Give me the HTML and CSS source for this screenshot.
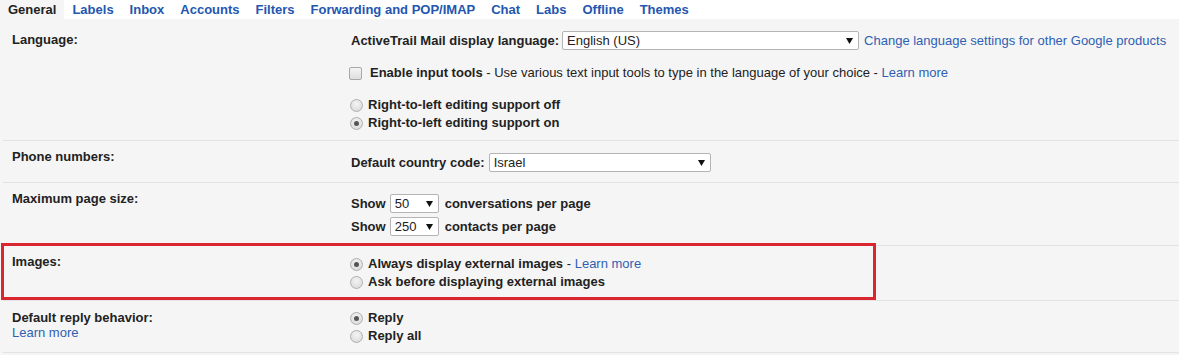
FILE: index.html
```html
<!DOCTYPE html>
<html lang="en">
<head>
<meta charset="utf-8">
<title>Settings</title>
<link rel="stylesheet" href="styles.css">
</head>
<body>
<nav class="tabs">
  <span class="tab active">General</span>
  <a class="tab" href="#">Labels</a>
  <a class="tab" href="#">Inbox</a>
  <a class="tab" href="#">Accounts</a>
  <a class="tab" href="#">Filters</a>
  <a class="tab" href="#">Forwarding and POP/IMAP</a>
  <a class="tab" href="#">Chat</a>
  <a class="tab" href="#">Labs</a>
  <a class="tab" href="#">Offline</a>
  <a class="tab" href="#">Themes</a>
</nav>

<main class="settings">
  <section class="row row-first">
    <div class="label">Language:</div>
    <div class="value">
      <div class="line sel-line">
        <b>ActiveTrail Mail display language:</b>
        <span class="select sel-lang"><span class="sel-text">English (US)</span><svg class="arrow" width="7" height="6" viewBox="0 0 7 6"><path d="M0 0H7L3.5 6Z"/></svg></span>
        <a class="link after-sel" href="#">Change language settings for other Google products</a>
      </div>
      <div class="line check-line">
        <span class="checkbox"></span>
        <span><b>Enable input tools</b> - Use various text input tools to type in the language of your choice - <a class="link" href="#">Learn more</a></span>
      </div>
      <div class="radio-group">
        <div class="radio-line"><span class="radio"></span><b>Right-to-left editing support off</b></div>
        <div class="radio-line"><span class="radio checked"></span><b>Right-to-left editing support on</b></div>
      </div>
    </div>
  </section>

  <section class="row row-phone">
    <div class="label">Phone numbers:</div>
    <div class="value">
      <div class="line sel-line">
        <b>Default country code:</b>
        <span class="select sel-country"><span class="sel-text">Israel</span><svg class="arrow" width="7" height="6" viewBox="0 0 7 6"><path d="M0 0H7L3.5 6Z"/></svg></span>
      </div>
    </div>
  </section>

  <section class="row row-size">
    <div class="label">Maximum page size:</div>
    <div class="value stack">
      <div class="line sel-line">
        <b>Show</b>
        <span class="select sel-small"><span class="sel-text">50</span><svg class="arrow" width="7" height="6" viewBox="0 0 7 6"><path d="M0 0H7L3.5 6Z"/></svg></span>
        <b class="after-small">conversations per page</b>
      </div>
      <div class="line sel-line">
        <b>Show</b>
        <span class="select sel-small"><span class="sel-text">250</span><svg class="arrow" width="7" height="6" viewBox="0 0 7 6"><path d="M0 0H7L3.5 6Z"/></svg></span>
        <b class="after-small">contacts per page</b>
      </div>
    </div>
  </section>

  <section class="row row-images">
    <div class="highlight"></div>
    <div class="label">Images:</div>
    <div class="value">
      <div class="radio-line"><span class="radio checked"></span><span><b>Always display external images</b> - <a class="link" href="#">Learn more</a></span></div>
      <div class="radio-line"><span class="radio"></span><b>Ask before displaying external images</b></div>
    </div>
  </section>

  <section class="row row-reply">
    <div class="label">Default reply behavior:<br><a class="link normal" href="#">Learn more</a></div>
    <div class="value">
      <div class="radio-line"><span class="radio checked"></span><b>Reply</b></div>
      <div class="radio-line"><span class="radio"></span><b>Reply all</b></div>
    </div>
  </section>
</main>
</body>
</html>
```

FILE: styles.css
```css
* { box-sizing: border-box; }

html, body {
  margin: 0;
  padding: 0;
  background: #ffffff;
}

body {
  font-family: "Liberation Sans", Arial, sans-serif;
  font-size: 13px;
  color: #222222;
  height: 355px;
  display: flex;
  flex-direction: column;
  overflow: hidden;
}

b { font-weight: bold; }

.tabs {
  display: flex;
  height: 19px;
  background: #ffffff;
}

.tab {
  display: block;
  padding: 0 8px;
  height: 19px;
  line-height: 19px;
  font-weight: bold;
  color: #2456b0;
  text-decoration: none;
}

.tab.active {
  color: #222222;
  background: #f5f5f5;
}

.settings {
  flex: 1;
  background: #f5f5f5;
}

.row {
  position: relative;
  display: grid;
  grid-template-columns: 346px 1fr;
  margin-left: 3px;
  border-bottom: 1px solid #e3e3e3;
}

.label {
  padding: 7px 0 0 9px;
  line-height: 18px;
  font-weight: bold;
}

.label .normal { font-weight: normal; }

.value {
  line-height: 18px;
}

.link {
  color: #2f5fb3;
  text-decoration: none;
  font-weight: normal;
}

.line {
  display: flex;
  align-items: center;
  padding-left: 2px;
}

.sel-line { height: 19px; }

.select {
  display: inline-flex;
  align-items: center;
  justify-content: space-between;
  height: 19px;
  margin-left: 4px;
  padding: 0 5px 0 4px;
  background: #ffffff;
  border: 1px solid #b4b4b4;
  border-radius: 2px;
  font-weight: normal;
  color: #222222;
}

.arrow { fill: #111111; flex: none; }

.sel-lang { width: 297px; margin-left: 3px; }
.sel-country { width: 222px; }
.sel-small { width: 49px; }

.after-sel { margin-left: 5px; }
.after-small { margin-left: 6px; }

.check-line {
  height: 18px;
  padding-left: 0;
  margin-top: 14px;
}

.checkbox {
  display: inline-block;
  width: 13px;
  height: 13px;
  margin-right: 8px;
  border: 1px solid #a8a8a8;
  border-radius: 2px;
  background: linear-gradient(#f4f4f4, #dedede);
}

.radio-group { margin-top: 14px; }

.radio-line {
  display: flex;
  align-items: center;
  height: 18px;
  margin-left: 1px;
}

.radio {
  position: relative;
  display: inline-block;
  width: 13px;
  height: 13px;
  margin-right: 5px;
  border: 1px solid #b0b0b0;
  border-radius: 50%;
  background: radial-gradient(circle at 50% 35%, #f4f4f4, #d6d6d6);
}

.radio.checked::after {
  content: "";
  position: absolute;
  left: 3px;
  top: 3px;
  width: 5px;
  height: 5px;
  border-radius: 50%;
  background: #555555;
}

/* per-row vertical spacing */
.row-first .label { padding-top: 12px; }
.row-first .value { padding: 12px 0 8px; }

.row-phone .value { padding: 12px 0 10px; }

.row-size .value { padding: 11px 0 9px; }
.row-size .line + .line { margin-top: 4px; }

.row-images .value { padding: 9px 0 9px; }

.row-reply .label { padding-top: 9px; line-height: 15px; }
.row-reply .value { padding: 8px 0 7px; }

/* annotation box drawn over the Images row */
.highlight {
  position: absolute;
  left: -2px;
  top: -3px;
  width: 875px;
  height: 57px;
  border: 3px solid #d9262f;
  pointer-events: none;
}
```
